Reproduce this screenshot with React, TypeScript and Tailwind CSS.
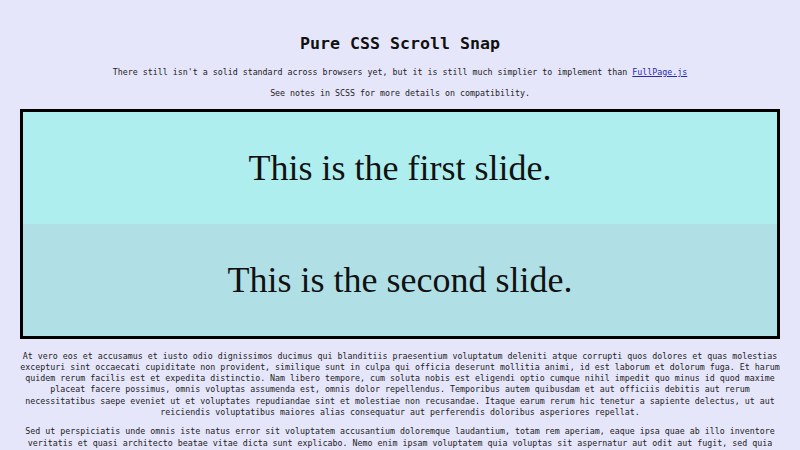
const SLIDES = ['This is the first slide.', 'This is the second slide.'];

const LOREM_1 =
  'At vero eos et accusamus et iusto odio dignissimos ducimus qui blanditiis praesentium voluptatum deleniti atque corrupti quos dolores et quas molestias excepturi sint occaecati cupiditate non provident, similique sunt in culpa qui officia deserunt mollitia animi, id est laborum et dolorum fuga. Et harum quidem rerum facilis est et expedita distinctio. Nam libero tempore, cum soluta nobis est eligendi optio cumque nihil impedit quo minus id quod maxime placeat facere possimus, omnis voluptas assumenda est, omnis dolor repellendus. Temporibus autem quibusdam et aut officiis debitis aut rerum necessitatibus saepe eveniet ut et voluptates repudiandae sint et molestiae non recusandae. Itaque earum rerum hic tenetur a sapiente delectus, ut aut reiciendis voluptatibus maiores alias consequatur aut perferendis doloribus asperiores repellat.';

const LOREM_2 =
  'Sed ut perspiciatis unde omnis iste natus error sit voluptatem accusantium doloremque laudantium, totam rem aperiam, eaque ipsa quae ab illo inventore veritatis et quasi architecto beatae vitae dicta sunt explicabo. Nemo enim ipsam voluptatem quia voluptas sit aspernatur aut odit aut fugit, sed quia consequuntur magni dolores eos qui ratione voluptatem sequi nesciunt. Neque porro quisquam est, qui dolorem ipsum quia dolor sit amet, consectetur, adipisci velit, sed quia non numquam eius modi tempora incidunt ut labore et dolore magnam aliquam quaerat voluptatem.';

export default function App() {
  return (
    <div className="min-h-[450px] bg-[#e6e6fa] px-[20px] text-center font-['DejaVu_Sans_Mono',monospace] text-[#222]">
      <h1 className="pt-[34px] text-[16.6px] font-bold leading-[20px] text-[#111]">Pure CSS Scroll Snap</h1>
      <p className="mt-[13px] text-[8.3px] leading-[11.3px]">
        There still isn't a solid standard across browsers yet, but it is still much simplier to implement than{' '}
        <a href="#" className="text-[#2a2ab0] underline">
          FullPage.js
        </a>
      </p>
      <p className="mt-[10px] text-[8.3px] leading-[11.3px]">See notes in SCSS for more details on compatibility.</p>

      <div className="mt-[9px] h-[230px] snap-y snap-mandatory overflow-y-auto border-[3px] border-black [scrollbar-width:none]">
        {SLIDES.map((text, i) => (
          <section
            key={text}
            className={`flex h-[112px] snap-start items-center justify-center font-['Liberation_Serif',serif] text-[36px] text-[#111] ${
              i === 0 ? 'bg-[#afeeee]' : 'bg-[#b0e0e6]'
            }`}
          >
            {text}
          </section>
        ))}
      </div>

      <p className="mt-[12px] text-[8.3px] leading-[11.3px]">{LOREM_1}</p>
      <p className="mt-[8px] text-[8.3px] leading-[11.3px]">{LOREM_2}</p>
    </div>
  );
}
